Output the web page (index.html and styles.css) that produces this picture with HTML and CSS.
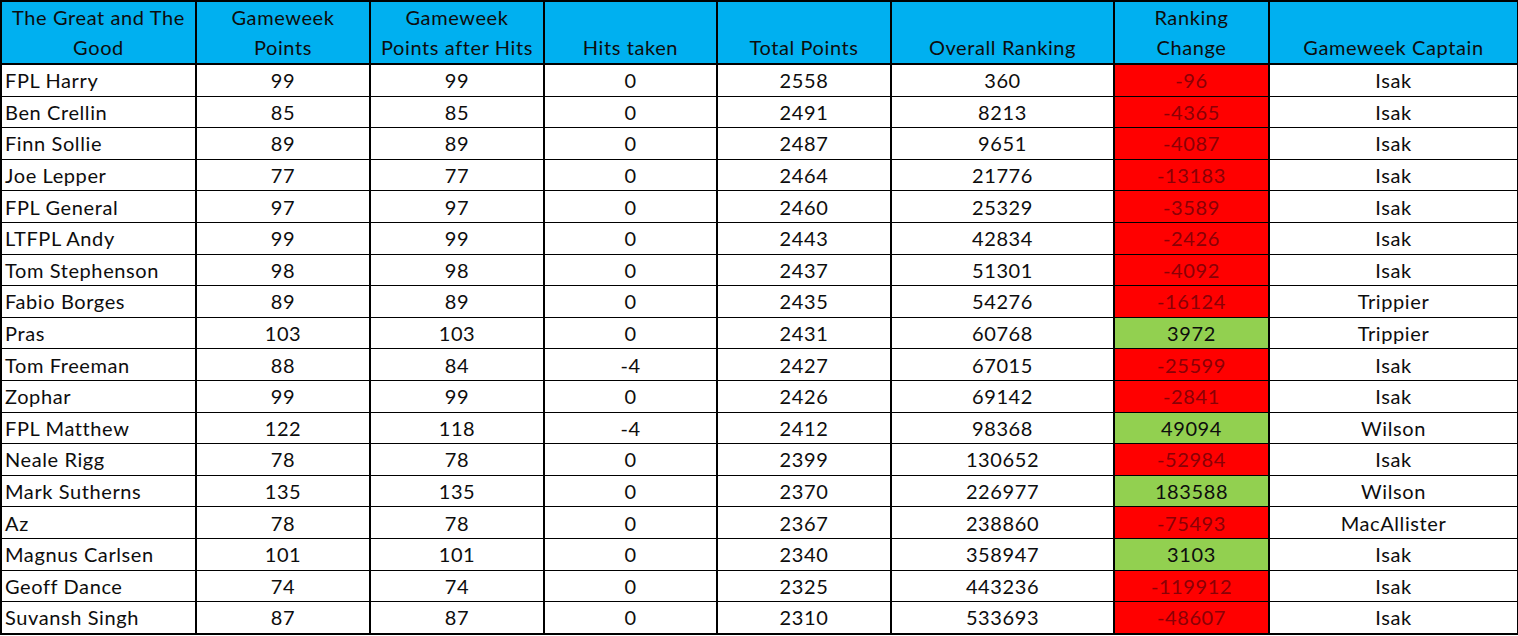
FILE: index.html
```html
<!DOCTYPE html>
<html>
<head>
<meta charset="utf-8">
<link rel="stylesheet" href="styles.css">
</head>
<body>
<table class="sheet">
  <colgroup>
    <col class="c-name"><col class="c-gw"><col class="c-gwh"><col class="c-hits"><col class="c-total"><col class="c-rank"><col class="c-change"><col class="c-capt">
  </colgroup>
  <thead>
    <tr>
      <th>The Great and The<br>Good</th>
      <th>Gameweek<br>Points</th>
      <th>Gameweek<br>Points after Hits</th>
      <th>Hits taken</th>
      <th>Total Points</th>
      <th>Overall Ranking</th>
      <th>Ranking<br>Change</th>
      <th>Gameweek Captain</th>
    </tr>
  </thead>
  <tbody>
    <tr><td class="name">FPL Harry</td><td>99</td><td>99</td><td>0</td><td>2558</td><td>360</td><td class="neg">-96</td><td>Isak</td></tr>
    <tr><td class="name">Ben Crellin</td><td>85</td><td>85</td><td>0</td><td>2491</td><td>8213</td><td class="neg">-4365</td><td>Isak</td></tr>
    <tr><td class="name">Finn Sollie</td><td>89</td><td>89</td><td>0</td><td>2487</td><td>9651</td><td class="neg">-4087</td><td>Isak</td></tr>
    <tr><td class="name">Joe Lepper</td><td>77</td><td>77</td><td>0</td><td>2464</td><td>21776</td><td class="neg">-13183</td><td>Isak</td></tr>
    <tr><td class="name">FPL General</td><td>97</td><td>97</td><td>0</td><td>2460</td><td>25329</td><td class="neg">-3589</td><td>Isak</td></tr>
    <tr><td class="name">LTFPL Andy</td><td>99</td><td>99</td><td>0</td><td>2443</td><td>42834</td><td class="neg">-2426</td><td>Isak</td></tr>
    <tr><td class="name">Tom Stephenson</td><td>98</td><td>98</td><td>0</td><td>2437</td><td>51301</td><td class="neg">-4092</td><td>Isak</td></tr>
    <tr><td class="name">Fabio Borges</td><td>89</td><td>89</td><td>0</td><td>2435</td><td>54276</td><td class="neg">-16124</td><td>Trippier</td></tr>
    <tr><td class="name">Pras</td><td>103</td><td>103</td><td>0</td><td>2431</td><td>60768</td><td class="pos">3972</td><td>Trippier</td></tr>
    <tr><td class="name">Tom Freeman</td><td>88</td><td>84</td><td>-4</td><td>2427</td><td>67015</td><td class="neg">-25599</td><td>Isak</td></tr>
    <tr><td class="name">Zophar</td><td>99</td><td>99</td><td>0</td><td>2426</td><td>69142</td><td class="neg">-2841</td><td>Isak</td></tr>
    <tr><td class="name">FPL Matthew</td><td>122</td><td>118</td><td>-4</td><td>2412</td><td>98368</td><td class="pos">49094</td><td>Wilson</td></tr>
    <tr><td class="name">Neale Rigg</td><td>78</td><td>78</td><td>0</td><td>2399</td><td>130652</td><td class="neg">-52984</td><td>Isak</td></tr>
    <tr><td class="name">Mark Sutherns</td><td>135</td><td>135</td><td>0</td><td>2370</td><td>226977</td><td class="pos">183588</td><td>Wilson</td></tr>
    <tr><td class="name">Az</td><td>78</td><td>78</td><td>0</td><td>2367</td><td>238860</td><td class="neg">-75493</td><td>MacAllister</td></tr>
    <tr><td class="name">Magnus Carlsen</td><td>101</td><td>101</td><td>0</td><td>2340</td><td>358947</td><td class="pos">3103</td><td>Isak</td></tr>
    <tr><td class="name">Geoff Dance</td><td>74</td><td>74</td><td>0</td><td>2325</td><td>443236</td><td class="neg">-119912</td><td>Isak</td></tr>
    <tr><td class="name">Suvansh Singh</td><td>87</td><td>87</td><td>0</td><td>2310</td><td>533693</td><td class="neg">-48607</td><td>Isak</td></tr>
  </tbody>
</table>
</body>
</html>
```

FILE: styles.css
```css
html, body {
  margin: 0;
  padding: 0;
  background: #ffffff;
}

.sheet {
  border-collapse: collapse;
  table-layout: fixed;
  width: 1517px;
  font-family: Lato, "Open Sans", sans-serif;
  font-size: 20px;
  letter-spacing: 0.6px;
  color: #0d0d0d;
  border: 2px solid #000000;
}

.c-name { width: 195px; }
.c-gw { width: 174px; }
.c-gwh { width: 174px; }
.c-hits { width: 173px; }
.c-total { width: 174px; }
.c-rank { width: 223px; }
.c-change { width: 155px; }
.c-capt { width: 249px; }

.sheet th {
  background: #00b0f0;
  font-weight: normal;
  height: 60px;
  padding: 0 2px 1px;
  line-height: 30px;
  vertical-align: bottom;
  text-align: center;
  white-space: nowrap;
  border-left: 2px solid #000000;
  border-right: 2px solid #000000;
  border-bottom: 2px solid #000000;
}

.sheet td {
  height: 30.6px;
  padding: 0 2px;
  text-align: center;
  vertical-align: middle;
  line-height: 30px;
  border-left: 2px solid #000000;
  border-right: 2px solid #000000;
  border-bottom: 1px solid #000000;
  white-space: nowrap;
}

.sheet td.name {
  text-align: left;
  padding-left: 3px;
}

.sheet td.neg {
  background: #ff0000;
  color: #8a0006;
}

.sheet td.pos {
  background: #92d050;
  color: #0d0d0d;
}
```
